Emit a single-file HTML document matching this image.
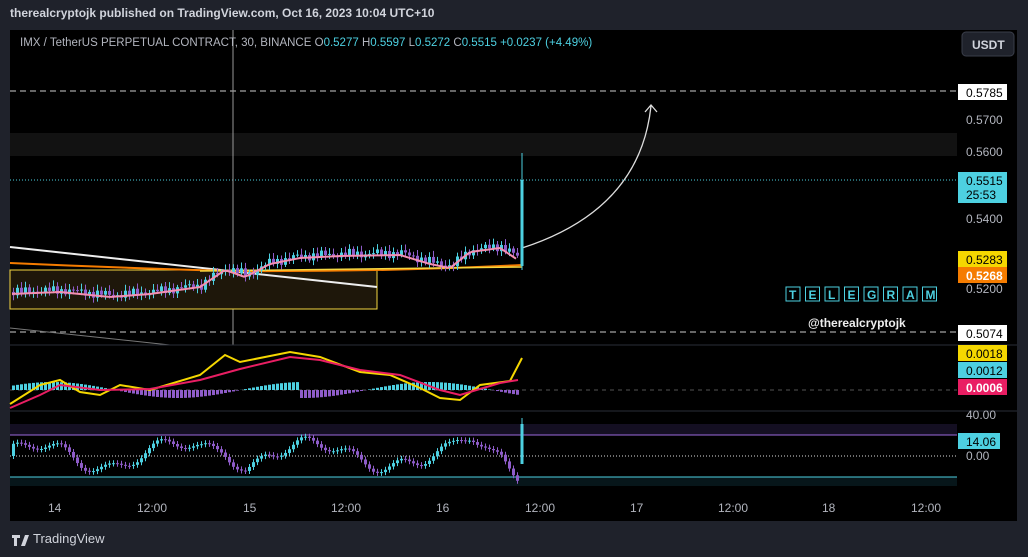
<!DOCTYPE html>
<html><head><meta charset="utf-8"><style>
html,body{margin:0;padding:0;background:#1f222b;width:1028px;height:557px;overflow:hidden;font-family:"Liberation Sans",sans-serif}
#top{position:absolute;left:10px;top:6px;color:#d1d4dc;font-size:12px;font-weight:bold}
#chart{position:absolute;left:10px;top:30px;width:1007px;height:491px;background:#000}
#bot{position:absolute;left:33px;top:531px;color:#d1d4dc;font-size:13px}
</style></head><body>
<div id="top">therealcryptojk published on TradingView.com, Oct 16, 2023 10:04 UTC+10</div>
<div id="chart"></div>
<svg id="s" width="1028" height="557" style="position:absolute;left:0;top:0" font-family="Liberation Sans, sans-serif">
<rect x="10" y="133" width="947" height="23" fill="#121212"/>
<line x1="10" y1="91" x2="957" y2="91" stroke="#ccc" stroke-dasharray="6,4"/>
<line x1="10" y1="332" x2="957" y2="332" stroke="#ccc" stroke-dasharray="6,4"/>
<line x1="10" y1="180" x2="957" y2="180" stroke="#4dd0e1" stroke-dasharray="1,2"/>
<line x1="233" y1="30" x2="233" y2="345" stroke="#999"/>
<rect x="10" y="270" width="367" height="39" fill="#1e170a" stroke="#f5d742"/>
<line x1="10" y1="328" x2="170" y2="345" stroke="#777"/>
<line x1="10" y1="247" x2="377" y2="287" stroke="#eee" stroke-width="2"/>
<path d="M10 263 Q120 268 230 271 Q380 272 522 265" stroke="#f57c00" stroke-width="2" fill="none"/>
<path d="M200 271 L522 267" stroke="#f5d742" stroke-width="1.5" fill="none"/>
<path d="M522 248 Q640 210 651 106" stroke="#ddd" stroke-width="1.3" fill="none"/>
<path d="M645 112 L651 105 L657 112" stroke="#ddd" stroke-width="1.3" fill="none"/>
<line x1="10" y1="345" x2="1017" y2="345" stroke="#2a2e39"/>
<line x1="10" y1="411" x2="1017" y2="411" stroke="#2a2e39"/>
<line x1="10" y1="390" x2="957" y2="390" stroke="#555" stroke-dasharray="4,4"/>
<rect x="10" y="424" width="947" height="11" fill="#140f22"/>
<line x1="10" y1="435" x2="957" y2="435" stroke="#9c6ade"/>
<line x1="10" y1="456" x2="957" y2="456" stroke="#ddd" stroke-dasharray="1,2"/>
<rect x="10" y="477" width="947" height="9" fill="#07161a"/>
<line x1="10" y1="477" x2="957" y2="477" stroke="#4dd0e1"/>
<g id="c"></g>
<g font-size="12" fill="#b2b5be">
<text x="20" y="46" font-size="11.5" fill="#b2b5be">IMX / TetherUS PERPETUAL CONTRACT, 30, BINANCE  O<tspan fill="#4dd0e1">0.5277</tspan>  H<tspan fill="#4dd0e1">0.5597</tspan>  L<tspan fill="#4dd0e1">0.5272</tspan>  C<tspan fill="#4dd0e1">0.5515 +0.0237 (+4.49%)</tspan></text>
<text x="966" y="124">0.5700</text><text x="966" y="156">0.5600</text><text x="966" y="223">0.5400</text><text x="966" y="293">0.5200</text>
<text x="966" y="419">40.00</text><text x="966" y="460">0.00</text>
<text x="48" y="512">14</text><text x="137" y="512">12:00</text><text x="243" y="512">15</text><text x="331" y="512">12:00</text><text x="436" y="512">16</text><text x="525" y="512">12:00</text><text x="630" y="512">17</text><text x="718" y="512">12:00</text><text x="822" y="512">18</text><text x="911" y="512">12:00</text>
</g>
<rect x="962" y="32" width="52" height="24" rx="4" fill="#1f222b" stroke="#3a3e4a"/>
<text x="972" y="49" font-size="12" font-weight="bold" fill="#d1d4dc">USDT</text>
<g font-size="12">
<rect x="958" y="84" width="49" height="16" fill="#fff"/><text x="966" y="97" fill="#000">0.5785</text>
<rect x="958" y="172" width="49" height="31" fill="#4dd0e1"/><text x="966" y="185" fill="#000">0.5515</text><text x="966" y="199" fill="#000">25:53</text>
<rect x="958" y="251" width="49" height="16" fill="#f5d700"/><text x="966" y="264" fill="#000">0.5283</text>
<rect x="958" y="267" width="49" height="16" fill="#f57c00"/><text x="966" y="280" fill="#fff" font-weight="bold">0.5268</text>
<rect x="958" y="325" width="49" height="16" fill="#fff"/><text x="966" y="338" fill="#000">0.5074</text>
<rect x="958" y="345" width="49" height="16" fill="#f5d700"/><text x="966" y="358" fill="#000">0.0018</text>
<rect x="958" y="362" width="49" height="16" fill="#4dd0e1"/><text x="966" y="375" fill="#000">0.0012</text>
<rect x="958" y="379" width="49" height="16" fill="#e91e63"/><text x="966" y="392" fill="#fff" font-weight="bold">0.0006</text>
<rect x="958" y="433" width="42" height="16" fill="#4dd0e1"/><text x="966" y="446" fill="#000">14.06</text>
</g>
<g font-size="12" fill="#4dd0e1" font-weight="bold" id="tg"></g>
<text x="808" y="327" font-size="12" font-weight="bold" fill="#eee">@therealcryptojk</text>
<path d="M12 535h8v3h-3v8h-3v-8h-2z M21 546l4-11h4l-4 11z" fill="#d1d4dc"/>
</svg>
<div id="bot">TradingView</div>
<script>
var NS="http://www.w3.org/2000/svg",g=document.getElementById('c');
function el(t,a){var e=document.createElementNS(NS,t);for(var k in a)e.setAttribute(k,a[k]);g.appendChild(e);return e;}
var pts=[[10,292],[60,290],[110,295],[150,292],[200,285],[225,268],[245,275],[270,262],[300,256],[340,254],[400,253],[430,262],[450,266],[470,250],[500,246],[518,258]];
function P(x){if(x<10)return 292;for(var i=1;i<pts.length;i++)if(x<=pts[i][0]){var a=pts[i-1],b=pts[i];return a[1]+(b[1]-a[1])*(x-a[0])/(b[0]-a[0]);}return 258;}
var prev=P(12),maPts=[],prevR=456;
for(var x=12;x<519;x+=4){var t=P(x)+Math.sin(x*0.7)*3+Math.sin(x*0.23)*2;var o=prev,c=t;var up=c<o;
var col=up?'#4dd0e1':'#8e5cc9';var tp=Math.min(o,c)-2-Math.abs(Math.sin(x))*4,bt=Math.max(o,c)+2+Math.abs(Math.cos(x*1.3))*3;
el('line',{x1:x+1.5,y1:tp,x2:x+1.5,y2:bt,stroke:col});el('rect',{x:x,y:Math.min(o,c),width:3,height:Math.max(1,Math.abs(c-o)),fill:col});prev=c;maPts.push(x+','+(P(x)+2));
var r=456-Math.sin(x*0.045)*12-Math.sin(x*0.13)*6+(P(x)-P(x-20))*0.8;
var rc=r<prevR?'#4dd0e1':'#8e5cc9';
el('line',{x1:x+1.5,y1:Math.min(r,prevR)-3,x2:x+1.5,y2:Math.max(r,prevR)+3,stroke:rc});el('rect',{x:x,y:Math.min(r,prevR),width:3,height:Math.max(1,Math.abs(prevR-r)),fill:rc});prevR=r;
var h=Math.sin(x*0.025+0.3)*8*(x<300?1:-1);var hc=h>0?'#4dd0e1':'#8e5cc9';el('rect',{x:x,y:h>0?390-h:390,width:3,height:Math.abs(h),fill:hc});}
el('polyline',{points:maPts.join(' '),stroke:'#f48fb1','stroke-width':2,fill:'none'});
el('rect',{x:520.5,y:180,width:3,height:86,fill:'#4dd0e1'});el('line',{x1:522,y1:153,x2:522,y2:270,stroke:'#4dd0e1'});
el('rect',{x:520.5,y:424,width:3,height:40,fill:'#4dd0e1'});el('line',{x1:522,y1:418,x2:522,y2:464,stroke:'#4dd0e1'});
el('polyline',{points:'10,404 40,385 60,380 80,392 100,395 120,385 150,390 200,375 225,355 240,362 270,356 290,352 320,357 360,372 390,375 420,388 440,398 460,400 480,385 510,381 522,358',stroke:'#f5d700','stroke-width':2,fill:'none'});
el('polyline',{points:'10,408 40,395 60,385 100,390 150,389 200,380 240,369 290,357 320,360 360,370 400,375 440,390 460,395 500,383 518,380',stroke:'#e91e63','stroke-width':2,fill:'none'});
var tg=document.getElementById('tg'),L="TELEGRAM";
for(var i=0;i<8;i++){var X=786+i*19.5;var r=document.createElementNS(NS,'rect');r.setAttribute('x',X);r.setAttribute('y',287);r.setAttribute('width',14);r.setAttribute('height',14);r.setAttribute('fill','none');r.setAttribute('stroke','#4dd0e1');tg.appendChild(r);
var t=document.createElementNS(NS,'text');t.setAttribute('x',X+3);t.setAttribute('y',299);t.textContent=L[i];tg.appendChild(t);}
</script>
</body></html>
